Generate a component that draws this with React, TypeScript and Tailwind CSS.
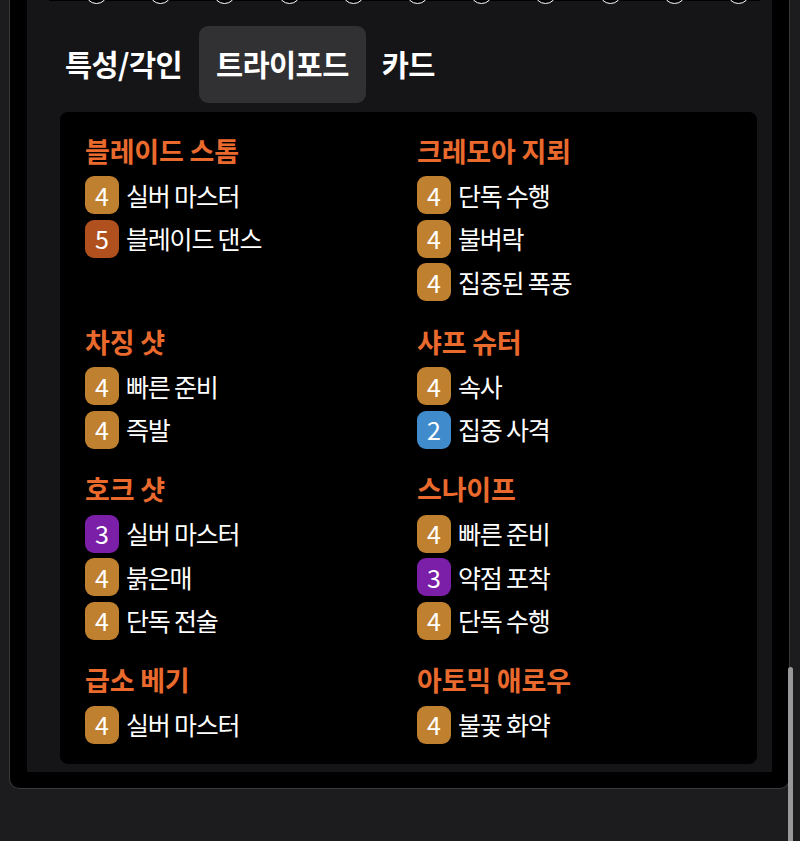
import React from "react";

type Item = { lv: number; name: string };
type Section = { title: string; items: Item[] };

const rows: [Section, Section][] = [
  [
    { title: "블레이드 스톰", items: [{ lv: 4, name: "실버 마스터" }, { lv: 5, name: "블레이드 댄스" }] },
    { title: "크레모아 지뢰", items: [{ lv: 4, name: "단독 수행" }, { lv: 4, name: "불벼락" }, { lv: 4, name: "집중된 폭풍" }] },
  ],
  [
    { title: "차징 샷", items: [{ lv: 4, name: "빠른 준비" }, { lv: 4, name: "즉발" }] },
    { title: "샤프 슈터", items: [{ lv: 4, name: "속사" }, { lv: 2, name: "집중 사격" }] },
  ],
  [
    { title: "호크 샷", items: [{ lv: 3, name: "실버 마스터" }, { lv: 4, name: "붉은매" }, { lv: 4, name: "단독 전술" }] },
    { title: "스나이프", items: [{ lv: 4, name: "빠른 준비" }, { lv: 3, name: "약점 포착" }, { lv: 4, name: "단독 수행" }] },
  ],
  [
    { title: "급소 베기", items: [{ lv: 4, name: "실버 마스터" }] },
    { title: "아토믹 애로우", items: [{ lv: 4, name: "불꽃 화약" }] },
  ],
];

function Badge({ lv }: { lv: number }) {
  const cls =
    lv === 5
      ? "bg-[#b0501f]"
      : lv === 3
      ? "bg-[#7b1fa8]"
      : lv === 2
      ? "bg-[#3f8bcc]"
      : "bg-[#bf812f]";
  return (
    <div
      className={`${cls} flex h-[38px] w-[34px] shrink-0 items-center justify-center rounded-[9px] text-[25px] leading-none text-white`}
    >
      {lv}
    </div>
  );
}

function SectionBlock({ s }: { s: Section }) {
  return (
    <div className="flex flex-col">
      <div className="flex h-[38px] items-center text-[27px] font-bold tracking-[-0.2px] text-[#ea6a2e]">
        {s.title}
      </div>
      <div className="mt-[6px] flex flex-col gap-[5.5px]">
        {s.items.map((it, i) => (
          <div key={i} className="flex h-[38px] items-center gap-[7px]">
            <Badge lv={it.lv} />
            <span className="text-[25px] leading-none tracking-[-1.2px] text-white">{it.name}</span>
          </div>
        ))}
      </div>
    </div>
  );
}

export default function App() {
  const fam = { fontFamily: '"Noto Sans CJK KR", "Noto Sans", sans-serif' };
  return (
    <div className="relative min-h-[841px] w-[800px] overflow-hidden bg-[#1c1c1e]" style={fam}>
      <div className="ml-[9px] w-[781px] rounded-b-[10px] border-x border-b border-[#3a3a3c] bg-black px-[17px] pb-[16px]">
        <div className="bg-[#151517] pb-[8px]">
          {/* ring row */}
          <div className="ml-[22px] mr-[12px] flex h-[4px] items-end justify-between border-t border-black bg-transparent pl-[36px] pr-[10px]">
            {Array.from({ length: 11 }).map((_, i) => (
              <div
                key={i}
                className="h-[23px] w-[23px] shrink-0 rounded-full border-[1.5px] border-white bg-black"
              />
            ))}
          </div>
          {/* tabs */}
          <div className="ml-[21px] mt-[22px] flex h-[77px] items-center text-[29.5px] font-bold tracking-[-0.6px] text-white">
            <div className="flex h-full items-center px-[17px] pb-[2px]">특성/각인</div>
            <div className="flex h-full items-center rounded-[9px] bg-[#313133] px-[17px] pb-[2px]">트라이포드</div>
            <div className="flex h-full items-center px-[16px] pb-[2px]">카드</div>
          </div>
          {/* content card */}
          <div className="ml-[33px] mr-[15px] mt-[9px] rounded-[8px] bg-black pb-[20px] pl-[25px] pt-[20px]">
            <div className="flex flex-col gap-[22px]">
              {rows.map((r, i) => (
                <div key={i} className="grid grid-cols-[332px_1fr]">
                  <SectionBlock s={r[0]} />
                  <SectionBlock s={r[1]} />
                </div>
              ))}
            </div>
          </div>
        </div>
      </div>
      {/* scrollbar */}
      <div className="absolute left-[788px] top-[667px] h-[200px] w-[5px] rounded-full bg-[#98989a]" />
    </div>
  );
}
